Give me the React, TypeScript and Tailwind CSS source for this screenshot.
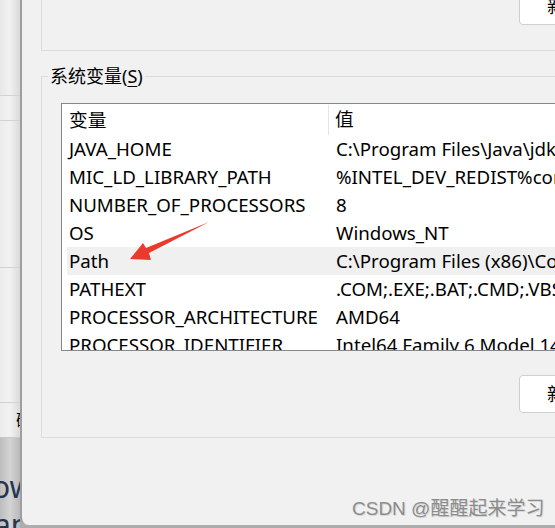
import React from "react";

const rows: [string, string][] = [
  ["JAVA_HOME", "C:\\Program Files\\Java\\jdk1.8.0_202"],
  ["MIC_LD_LIBRARY_PATH", "%INTEL_DEV_REDIST%compiler\\lib\\mic"],
  ["NUMBER_OF_PROCESSORS", "8"],
  ["OS", "Windows_NT"],
  ["Path", "C:\\Program Files (x86)\\Common Files\\Oracle\\Java\\javapath"],
  ["PATHEXT", ".COM;.EXE;.BAT;.CMD;.VBS;.VBE;.JS;.JSE;.WSF;.WSH;.MSC"],
  ["PROCESSOR_ARCHITECTURE", "AMD64"],
  ["PROCESSOR_IDENTIFIER", "Intel64 Family 6 Model 142 Stepping 10, GenuineIntel"],
];

function LeftStrip() {
  return (
    <div className="w-[20px] h-[528px] flex-none overflow-hidden flex flex-col">
      <div className="h-[95px] flex-none bg-gradient-to-r from-[#e8e8e8] via-[#f1f1f1] to-[#d9d9d9]" />
      <div className="h-[25px] flex-none border-t border-[#d2d2d2] bg-gradient-to-r from-[#ececec] via-[#f2f2f2] to-[#dadada]" />
      <div className="h-[147px] flex-none border-t border-[#d2d2d2] bg-gradient-to-r from-[#ececec] via-[#f2f2f2] to-[#dadada]" />
      <div className="h-[135px] flex-none border-t border-[#d2d2d2] bg-gradient-to-r from-[#ececec] via-[#f2f2f2] to-[#dadada]" />
      <div className="h-[35px] flex-none border-t border-[#d2d2d2] bg-gradient-to-r from-[#ececec] via-[#f2f2f2] to-[#dadada] flex items-center">
        <span className="ml-[16px] text-[16px] leading-none text-black whitespace-nowrap">确</span>
      </div>
      <div className="flex-1 border-t border-[#c8c8c8] bg-gradient-to-r from-[#bdbdbd] via-[#d4d4d4] to-[#b9b9b9] flex flex-col">
        <div className="h-[30px] flex-none" />
        <span className="flex-none -ml-[8px] text-[30px] leading-[38px] text-[#26344f] whitespace-nowrap">ow</span>
        <span className="flex-none -ml-[6px] text-[30px] leading-[38px] text-[#26344f] whitespace-nowrap">an</span>
      </div>
    </div>
  );
}

function Arrow() {
  return (
    <svg
      className="absolute left-0 top-0 pointer-events-none"
      width="555"
      height="528"
      viewBox="0 0 555 528"
    >
      <polygon
        points="130,259 143,243 146,248 209,222 149,253 151,260"
        fill="#ea3a2c"
      />
    </svg>
  );
}

export default function App() {
  return (
    <div
      className="relative w-[555px] h-[528px] overflow-hidden flex bg-[#adadad]"
      style={{ fontFamily: '"Noto Sans", "Noto Sans CJK SC", sans-serif' }}
    >
      <LeftStrip />
      <div className="w-[535px] h-[525px] flex-none border-l-2 border-[#9e9e9e] bg-[#f1f1f1] rounded-bl-[8px] overflow-hidden">
        <div className="w-[720px] pl-[19px] text-black text-[18.7px]">
          {/* top group box (cut off) */}
          <div className="h-[51px] flex items-start border-l border-b border-[#dcdcdc] pl-[477px]">
            <div className="-mt-[13px] h-[38px] w-[130px] flex-none bg-white border border-[#cfcfcf] rounded-[4px] flex items-center pl-[27px] whitespace-nowrap">
              新建(W)...
            </div>
          </div>

          {/* system variables */}
          <fieldset className="mt-[13px] border border-[#dcdcdc] p-0 pb-[24px] m-0 min-w-0">
            <legend className="ml-[6px] px-[2px] text-[18px] leading-[24px] whitespace-nowrap">
              系统变量(<span className="underline underline-offset-[3px]">S</span>)
            </legend>
            <div className="mt-[15px] ml-[19px] h-[248px] border border-[#828790] bg-white overflow-hidden pl-[5px]">
              <div className="h-[31px] flex">
                <div className="w-[262px] flex-none border-r border-[#e5e5e5] mt-[1px] flex items-center pl-[2px]">
                  变量
                </div>
                <div className="flex items-center pl-[6px]">值</div>
              </div>
              {rows.map(([k, v]) => (
                <div
                  key={k}
                  className={
                    "h-[28px] flex items-center whitespace-nowrap " +
                    (k === "Path" ? "bg-[#f0f0f0]" : "")
                  }
                >
                  <div className="w-[262px] flex-none pl-[2px]">{k}</div>
                  <div className="pl-[7px]">{v}</div>
                </div>
              ))}
            </div>
            <div className="mt-[24px] pl-[477px] flex">
              <div className="h-[38px] w-[130px] flex-none bg-white border border-[#cfcfcf] rounded-[4px] flex items-center pl-[27px] whitespace-nowrap">
                新建(W)...
              </div>
            </div>
          </fieldset>
        </div>
      </div>
      <div
        className="absolute left-[352px] top-[495px] text-[19px] leading-[28px] text-[#8c8c8c] whitespace-nowrap"
        style={{
          fontFamily: '"Liberation Sans", "Noto Sans CJK SC", sans-serif',
          textShadow: "1px 1px 0 #d8d8d8",
        }}
      >
        CSDN @醒醒起来学习
      </div>
      <Arrow />
    </div>
  );
}
